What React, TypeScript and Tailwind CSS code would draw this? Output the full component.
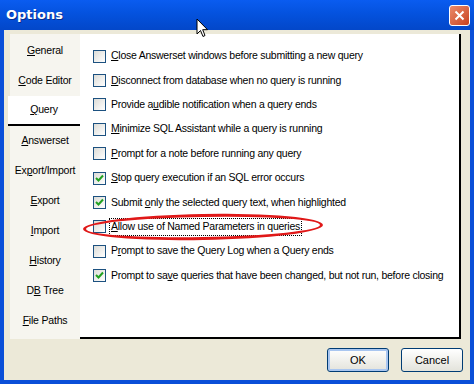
import React from 'react';

const tabs = [
  { pre: '', u: 'G', post: 'eneral' },
  { pre: '', u: 'C', post: 'ode Editor' },
  { pre: '', u: 'Q', post: 'uery' },
  { pre: '', u: 'A', post: 'nswerset' },
  { pre: 'Ex', u: 'p', post: 'ort/Import' },
  { pre: '', u: 'E', post: 'xport' },
  { pre: '', u: 'I', post: 'mport' },
  { pre: '', u: 'H', post: 'istory' },
  { pre: 'D', u: 'B', post: ' Tree' },
  { pre: '', u: 'F', post: 'ile Paths' },
];

const options = [
  { pre: '', u: 'C', post: 'lose Answerset windows before submitting a new query', on: false },
  { pre: '', u: 'D', post: 'isconnect from database when no query is running', on: false },
  { pre: 'Provide a', u: 'u', post: 'dible notification when a query ends', on: false },
  { pre: '', u: 'M', post: 'inimize SQL Assistant while a query is running', on: false },
  { pre: '', u: 'P', post: 'rompt for a note before running any query', on: false },
  { pre: '', u: 'S', post: 'top query execution if an SQL error occurs', on: true },
  { pre: 'Submit ', u: 'o', post: 'nly the selected query text, when highlighted', on: true },
  { pre: '', u: 'A', post: 'llow use of Named Parameters in queries', on: false, focus: true },
  { pre: 'P', u: 'r', post: 'ompt to save the Query Log when a Query ends', on: false },
  { pre: 'Prompt to sa', u: 'v', post: 'e queries that have been changed, but not run, before closing', on: true },
];

function Box({ on }: { on: boolean }) {
  return (
    <div className="w-[13px] h-[13px] border border-[#1c5180] bg-gradient-to-br from-[#dcdcd7] to-white flex items-center justify-center shrink-0">
      {on && (
        <svg width="9" height="9" viewBox="0 0 9 9">
          <path d="M1 4 L3.5 6.5 L8 1.5" stroke="#21a121" strokeWidth="2" fill="none" />
        </svg>
      )}
    </div>
  );
}

function App() {
  return (
    <div
      className="w-[474px] h-[384px] bg-[#0a4fd8] flex flex-col overflow-hidden relative"
      style={{ fontFamily: '"Liberation Sans", Arial, sans-serif' }}
    >
      {/* title bar */}
      <div className="h-[30px] shrink-0 bg-gradient-to-b from-[#0a5cf0] via-[#0451dc] to-[#0347c9] flex items-center justify-between pl-[6px] pr-[4px]">
        <span className="text-white font-bold text-[13px] [text-shadow:1px_1px_#0a2c8c]" style={{ fontFamily: '"DejaVu Sans", sans-serif' }}>
          Options
        </span>
        <div className="w-[21px] h-[21px] rounded-[3px] border border-white bg-gradient-to-br from-[#ea8a6a] to-[#c8401b] flex items-center justify-center">
          <svg width="11" height="11" viewBox="0 0 11 11">
            <path d="M1.5 1.5 L9.5 9.5 M9.5 1.5 L1.5 9.5" stroke="white" strokeWidth="2" />
          </svg>
        </div>
      </div>

      {/* body */}
      <div className="flex-1 mx-[4px] mb-[4px] bg-[#ece9d8] flex flex-col">
        <div className="flex pl-[6px] pt-[4px]">
          {/* tabs */}
          <div className="w-[70px] h-[305px] bg-[#f6f5ef] flex flex-col pt-[2px]">
            {tabs.map((t, i) => (
              <div
                key={i}
                className={
                  i === 2
                    ? 'h-[30px] bg-white -ml-[2px] w-[72px] border-b-2 border-black flex items-center justify-center text-[10.5px] tracking-[-0.2px] text-black'
                    : 'h-[30px] flex items-center justify-center text-[10.5px] tracking-[-0.2px] text-black'
                }
              >
                <span className="whitespace-pre">
                  {t.pre}
                  <span className="underline">{t.u}</span>
                  {t.post}
                </span>
              </div>
            ))}
          </div>

          {/* panel */}
          <div className="w-[381px] h-[305px] bg-white border-r-2 border-b-2 border-black flex flex-col pl-[13px] pt-[10px]">
            {options.map((o, i) => (
              <div key={i} className="h-[24.4px] flex items-center gap-[5px] text-[10.5px] tracking-[-0.25px] text-black relative whitespace-nowrap">
                <Box on={o.on} />
                <span className={o.focus ? 'outline outline-1 outline-dotted outline-black px-[1px] -ml-[1px]' : ''}>
                  {o.pre}
                  <span className="underline">{o.u}</span>
                  {o.post}
                </span>
                {o.focus && (
                  <div className="absolute left-[-10px] top-[-1px] w-[240px] h-[26px] rounded-[50%] border-[3px] border-[#e01818] -rotate-[1deg]" />
                )}
              </div>
            ))}
          </div>
        </div>

        {/* buttons */}
        <div className="flex justify-end gap-[12px] pr-[7px] pt-[9px]">
          <button className="w-[62px] h-[24px] rounded-[3px] border border-[#003c74] bg-gradient-to-b from-white to-[#e3e3db] text-[11px] text-black shadow-[inset_0_0_0_2px_#a9c6f0]">
            OK
          </button>
          <button className="w-[62px] h-[24px] rounded-[3px] border border-[#003c74] bg-gradient-to-b from-white to-[#e3e3db] text-[11px] text-black">
            Cancel
          </button>
        </div>
      </div>

      {/* mouse cursor */}
      <svg className="absolute left-[196px] top-[18px]" width="13" height="20" viewBox="0 0 13 20">
        <path d="M1 1 L1 16 L4.5 12.5 L7 18.5 L9 17.5 L6.7 11.7 L11.5 11.7 Z" fill="white" stroke="black" strokeWidth="1" />
      </svg>
    </div>
  );
}

export default App;
